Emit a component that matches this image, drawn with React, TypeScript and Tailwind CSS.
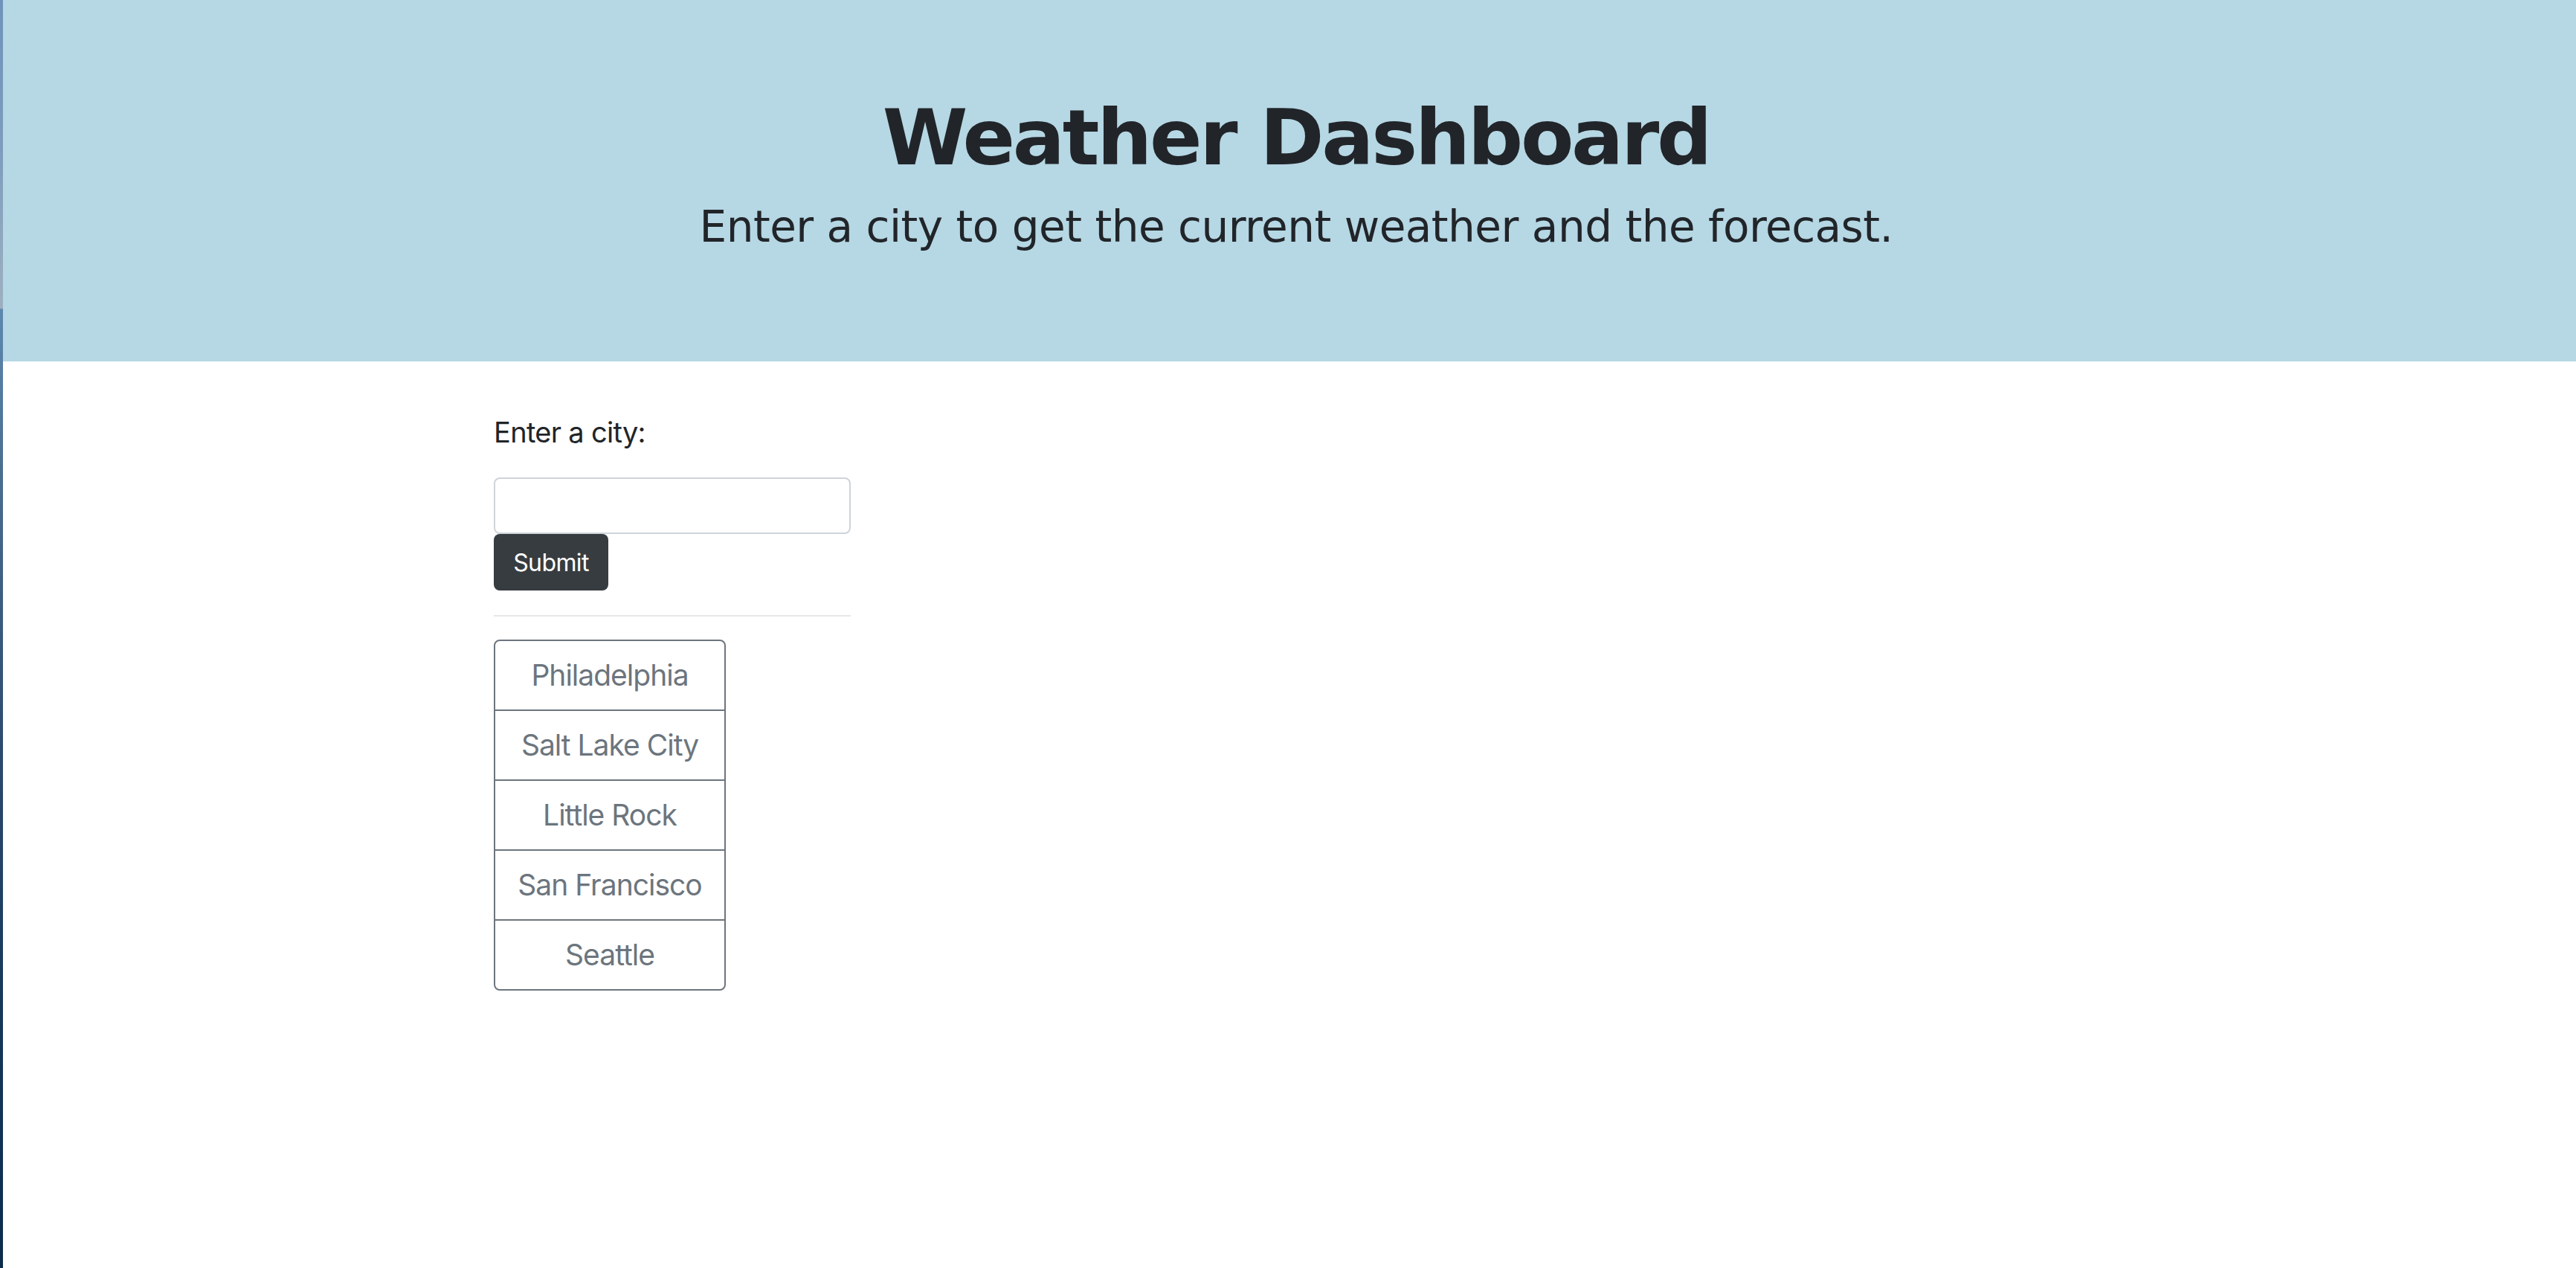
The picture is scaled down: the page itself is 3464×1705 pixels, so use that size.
export default function App() {
  const cities = ["Philadelphia", "Salt Lake City", "Little Rock", "San Francisco", "Seattle"];
  return (
    <div className="flex h-[1705px] w-full overflow-hidden bg-white font-['Inter',sans-serif] text-[#212529]">
      <div className="w-[4px] shrink-0 bg-[linear-gradient(180deg,#6f93ba_0%,#7e9dbd_12%,#9db0c0_24.3%,#5d88ae_24.4%,#48698a_40%,#2c4a6b_60%,#17375a_80%,#0d2c4c_100%)]" />
      <div className="flex min-w-0 flex-1 flex-col">
        <header className="flex h-[486px] flex-col items-center bg-[#b6d7e4] pl-[18px] pt-[125px]">
          <h1 className="font-['DejaVu_Sans',sans-serif] text-[104px] font-bold leading-[120px] tracking-[-3.25px]">Weather Dashboard</h1>
          <p className="mt-[25px] font-['DejaVu_Sans',sans-serif] text-[58px] leading-[70px] tracking-[-0.5px]">Enter a city to get the current weather and the forecast.</p>
        </header>
        <main className="ml-[660px] flex w-[480px] flex-col pt-[69px]">
          <label className="text-[38px] leading-[53px] tracking-[-0.7px]">Enter a city:</label>
          <input className="mt-[34px] h-[76px] w-[480px] rounded-[8px] border-2 border-[#ced4da] bg-white" />
          <button className="h-[76px] w-[154px] rounded-[8px] bg-[#373c40] pt-[2px] text-[32px] tracking-[-0.6px] text-white">Submit</button>
          <hr className="mt-[33px] h-[2px] border-0 bg-[#e5e7e8]" />
          <ul className="mt-[31px] w-[312px] rounded-[8px] border-2 border-[#6c757d] text-center text-[39px] tracking-[-1px] text-[#6c757d]">
            {cities.map((c) => (
              <li key={c} className="flex h-[94px] items-center justify-center border-b-2 border-[#6c757d] last:h-[92px] last:border-b-0">{c}</li>
            ))}
          </ul>
        </main>
      </div>
    </div>
  );
}
